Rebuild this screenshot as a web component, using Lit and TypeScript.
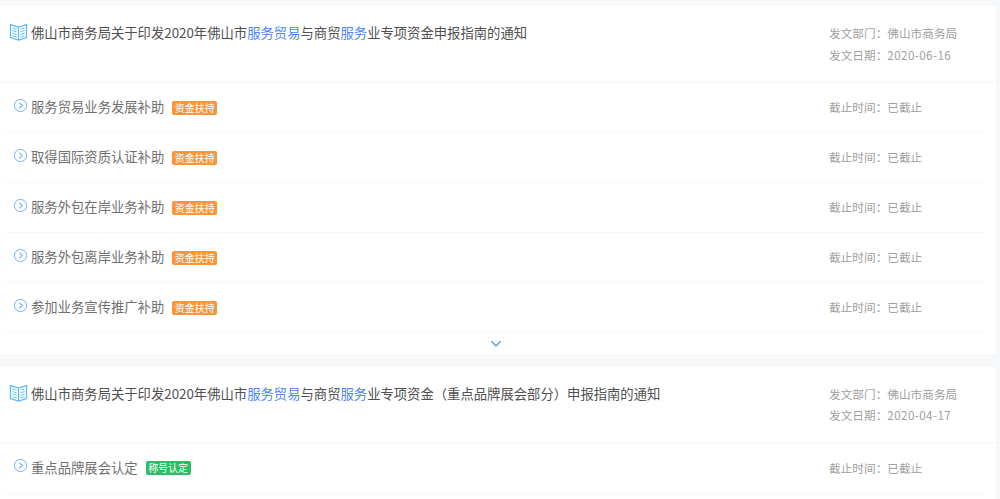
import { LitElement, css, html, svg } from 'lit';
import { customElement, property } from 'lit/decorators.js';

interface PolicyItem {
  name: string;
  tag: string;
  kind: 'fund' | 'title';
  deadline: string;
}

interface Policy {
  title: string;
  department: string;
  date: string;
  items: PolicyItem[];
  more: boolean;
}

const fund = (name: string): PolicyItem => ({ name, tag: '资金扶持', kind: 'fund', deadline: '已截止' });

const POLICIES: Policy[] = [
  {
    title: '佛山市商务局关于印发2020年佛山市服务贸易与商贸服务业专项资金申报指南的通知',
    department: '佛山市商务局',
    date: '2020-06-16',
    items: [
      fund('服务贸易业务发展补助'),
      fund('取得国际资质认证补助'),
      fund('服务外包在岸业务补助'),
      fund('服务外包离岸业务补助'),
      fund('参加业务宣传推广补助')
    ],
    more: true
  },
  {
    title: '佛山市商务局关于印发2020年佛山市服务贸易与商贸服务业专项资金（重点品牌展会部分）申报指南的通知',
    department: '佛山市商务局',
    date: '2020-04-17',
    items: [{ name: '重点品牌展会认定', tag: '称号认定', kind: 'title', deadline: '已截止' }],
    more: false
  }
];

const bookIcon = svg`
  <path d="M1.5 1.6 L9.5 4 L17.5 1.6 V14.6 L9.5 17 L1.5 14.6 Z M9.5 4 V17" stroke="#56b8f8" stroke-width="1.2" />
  <path d="M3.4 4.9 L7.6 6.2 M3.4 7.5 L7.6 8.8 M3.4 10.1 L7.6 11.4 M3.4 12.7 L7.6 14
    M15.6 4.9 L11.4 6.2 M15.6 7.5 L11.4 8.8 M15.6 10.1 L11.4 11.4 M15.6 12.7 L11.4 14" stroke="#62c4f6" />
`;

@customElement('policy-card')
class PolicyCard extends LitElement {
  static styles = css`
    :host {
      display: block;
      background: #fff;
    }
    svg {
      display: block;
      fill: none;
      flex: none;
    }
    .header {
      display: flex;
      box-sizing: border-box;
      height: 77px;
      padding: 16px 0 0 9px;
      border-bottom: 2px solid #f7f9fa;
    }
    .book {
      margin: 1px 3px 0 0;
    }
    .title {
      flex: 1;
      line-height: 21px;
      color: #505050;
      white-space: nowrap;
    }
    .highlight {
      color: #4a86f7;
    }
    .meta {
      flex: none;
      width: 167px;
      font-size: 11.67px;
      line-height: 21.5px;
      color: #a0a0a0;
      white-space: nowrap;
    }
    .date {
      letter-spacing: 0.4px;
    }
    .row {
      display: flex;
      align-items: center;
      box-sizing: border-box;
      height: 50px;
      margin: 0 12px 0 5px;
      padding: 0 0 2px 8px;
      border-bottom: 1px solid #f7f8f9;
    }
    .arrow {
      margin: -3px 3px 0 0;
    }
    .name {
      color: #707070;
    }
    .tag {
      height: 14px;
      margin: 2px 0 0 8px;
      padding: 0 2.5px;
      border-radius: 2px;
      font-size: 10px;
      line-height: 14px;
      color: #fff;
    }
    .fund {
      background: #fd9535;
    }
    .title-tag {
      background: #2dbd63;
    }
    .deadline {
      width: 155px;
      margin-left: auto;
      font-size: 11.67px;
      color: #a0a0a0;
    }
    .more {
      display: flex;
      justify-content: center;
      height: 21px;
      padding: 7px 5px 0 0;
      box-sizing: border-box;
    }
  `;

  @property({ attribute: false }) policy!: Policy;

  renderTitle() {
    return this.policy.title
      .split(/(服务贸易|服务)/)
      .map((part) => (part.startsWith('服务') ? html`<span class="highlight">${part}</span>` : part));
  }

  renderItem(item: PolicyItem) {
    return html`
      <div class="row">
        <svg class="arrow" width="15" height="15" viewBox="0 0 15 15" stroke="#72b5f8">
          <circle cx="7.5" cy="7.5" r="6.1" />
          <path d="M6.3 4.7 L9.3 7.5 L6.3 10.3" stroke-width="1.1" />
        </svg>
        <span class="name">${item.name}</span>
        <span class="tag ${item.kind === 'fund' ? 'fund' : 'title-tag'}">${item.tag}</span>
        <span class="deadline">截止时间：${item.deadline}</span>
      </div>
    `;
  }

  render() {
    const { policy } = this;
    return html`
      <div class="header">
        <svg class="book" width="19" height="18" viewBox="0 0 19 18">${bookIcon}</svg>
        <div class="title">${this.renderTitle()}</div>
        <div class="meta">
          <div>发文部门：${policy.department}</div>
          <div>发文日期：<span class="date">${policy.date}</span></div>
        </div>
      </div>
      ${policy.items.map((item) => this.renderItem(item))}
      ${policy.more
        ? html`<div class="more">
            <svg width="12" height="8" viewBox="0 0 12 8">
              <path d="M1.3 1.2 L6 5.8 L10.7 1.2" stroke="#69a5ee" stroke-width="1.6" />
            </svg>
          </div>`
        : ''}
    `;
  }
}

@customElement('app-root')
class AppRoot extends LitElement {
  static styles = css`
    :host {
      display: flex;
      flex-direction: column;
      gap: 12.5px;
      box-sizing: border-box;
      height: 499px;
      padding: 6px 4px 0 0;
      overflow: hidden;
      background: #f6f8fa;
      font-family: 'Noto Sans CJK SC', sans-serif;
      font-size: 13.33px;
    }
    policy-card {
      flex: none;
    }
    policy-card:last-child {
      flex: 1 0 auto;
    }
  `;

  render() {
    return POLICIES.map((policy) => html`<policy-card .policy=${policy}></policy-card>`);
  }
}
